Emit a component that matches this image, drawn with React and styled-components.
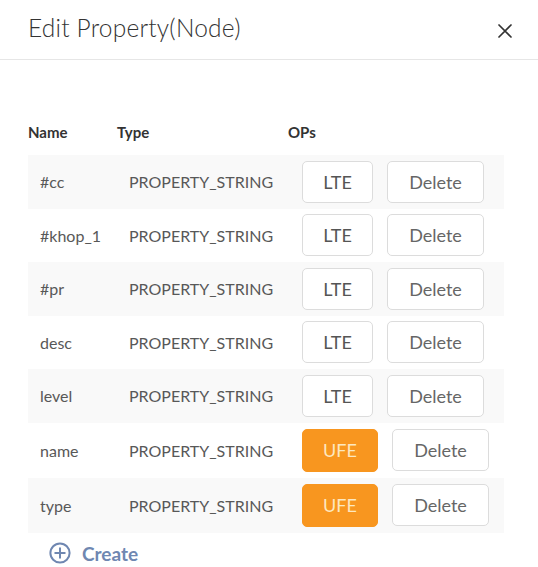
import React from 'react';
import styled, { createGlobalStyle } from 'styled-components';

const GlobalStyle = createGlobalStyle`
  html, body {
    margin: 0;
    background: #ffffff;
    font-family: 'Lato', 'Open Sans', sans-serif;
    color: #555555;
  }
`;

const properties = [
  { name: '#cc', type: 'PROPERTY_STRING', op: 'LTE' },
  { name: '#khop_1', type: 'PROPERTY_STRING', op: 'LTE' },
  { name: '#pr', type: 'PROPERTY_STRING', op: 'LTE' },
  { name: 'desc', type: 'PROPERTY_STRING', op: 'LTE' },
  { name: 'level', type: 'PROPERTY_STRING', op: 'LTE' },
  { name: 'name', type: 'PROPERTY_STRING', op: 'UFE' },
  { name: 'type', type: 'PROPERTY_STRING', op: 'UFE' },
];

const CloseIcon = () => (
  <svg width="16" height="16" viewBox="0 0 16 16">
    <path d="M2 2 L14 14 M14 2 L2 14" stroke="#333" strokeWidth="1.7" strokeLinecap="round" />
  </svg>
);

const PlusCircle = () => (
  <svg width="22" height="22" viewBox="0 0 22 22">
    <circle cx="11" cy="11" r="9.6" fill="none" stroke="#6f87b1" strokeWidth="2" />
    <path d="M11 5.5 V16.5 M5.5 11 H16.5" stroke="#6f87b1" strokeWidth="2" />
  </svg>
);

const App = () => (
  <>
    <GlobalStyle />
    <Modal>
      <Header>
        <Title>Edit Property(Node)</Title>
        <CloseButton aria-label="close"><CloseIcon /></CloseButton>
      </Header>
      <Body>
        <HeadRow>
          <HeadCell>Name</HeadCell>
          <HeadCell>Type</HeadCell>
          <HeadCell>OPs</HeadCell>
        </HeadRow>
        {properties.map((p, i) => (
          <Row key={p.name} $striped={i % 2 === 0} $tall={p.op === 'UFE'}>
            <Cell>{p.name}</Cell>
            <Cell>{p.type}</Cell>
            <Ops>
              <OpButton $active={p.op === 'UFE'}>{p.op}</OpButton>
              <DeleteButton>Delete</DeleteButton>
            </Ops>
          </Row>
        ))}
        <CreateLink>
          <PlusCircle />
          <span>Create</span>
        </CreateLink>
      </Body>
    </Modal>
  </>
);

const Modal = styled.div`
  width: 538px;
  min-height: 567px;
  background: #fff;
`;

const Header = styled.div`
  height: 60px;
  box-sizing: border-box;
  display: flex;
  align-items: center;
  justify-content: space-between;
  padding: 0 25px 0 28px;
  border-bottom: 1px solid #e6e6e6;
`;

const Title = styled.h1`
  margin: 0 0 4px;
  font-size: 24.5px;
  font-weight: 300;
  color: #333;
  letter-spacing: 0.2px;
`;

const CloseButton = styled.button`
  background: none;
  border: none;
  padding: 0;
  display: flex;
  cursor: pointer;
  margin-top: 2px;
`;

const Body = styled.div`
  padding: 57px 34px 0 28px;
`;

const grid = `
  display: grid;
  grid-template-columns: 89px 171px 1fr;
  align-items: center;
`;

const HeadRow = styled.div`
  ${grid}
  height: 30px;
  margin-bottom: 8px;
`;

const HeadCell = styled.div`
  font-size: 15px;
  font-weight: 700;
  color: #333;
`;

const Row = styled.div`
  ${grid}
  height: ${(p) => (p.$tall ? 55 : 53.5)}px;
  background: ${(p) => (p.$striped ? '#f9f9f9' : '#fff')};
`;

const Cell = styled.div`
  padding-left: 12px;
  font-size: 16px;
  color: #585858;
  white-space: nowrap;
`;

const Ops = styled.div`
  display: flex;
  align-items: center;
  gap: 14px;
  padding-left: 14px;
`;

const OpButton = styled.button`
  width: ${(p) => (p.$active ? 76 : 71)}px;
  height: ${(p) => (p.$active ? 43 : 42)}px;
  box-sizing: border-box;
  border-radius: 5px;
  border: 1px solid ${(p) => (p.$active ? '#f8961f' : '#dcdcdc')};
  background: ${(p) => (p.$active ? '#f8961f' : '#fff')};
  color: ${(p) => (p.$active ? '#fde7bf' : '#555')};
  font-family: inherit;
  font-size: 18px;
  padding: 0;
  cursor: pointer;
`;

const DeleteButton = styled.button`
  width: 97px;
  height: 42px;
  box-sizing: border-box;
  border-radius: 5px;
  border: 1px solid #dcdcdc;
  background: #fff;
  color: #666;
  font-family: inherit;
  font-size: 18px;
  padding: 0;
  cursor: pointer;
`;

const CreateLink = styled.div`
  display: flex;
  align-items: center;
  gap: 11px;
  padding: 9px 0 0 21px;
  color: #6f87b1;
  font-size: 19px;
  font-weight: 700;
  cursor: pointer;
`;

export default App;
